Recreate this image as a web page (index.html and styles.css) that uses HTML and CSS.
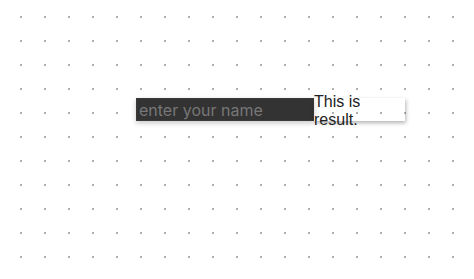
FILE: index.html
```html
<!DOCTYPE html>
<html>
<head>
<meta charset="utf-8">
<link rel="stylesheet" href="styles.css">
</head>
<body>
<div class="canvas">
  <div class="row">
    <input class="name-input" type="text" placeholder="enter your name">
    <div class="result"><span>This is result.</span></div>
  </div>
</div>
</body>
</html>
```
FILE: styles.css
```css
html, body {
  margin: 0;
  padding: 0;
  height: 100%;
}
body {
  background-color: #ffffff;
  background-image: radial-gradient(circle at center, #b0b0b0 0.9px, rgba(255,255,255,0) 1.5px);
  background-size: 24px 24px;
  background-position: 9px 5px;
  font-family: "Liberation Sans", Arial, sans-serif;
}
.canvas {
  padding: 98px 0 0 136px;
}
.row {
  display: flex;
  align-items: stretch;
  height: 23px;
}
.name-input {
  box-sizing: border-box;
  width: 178px;
  height: 23px;
  margin: 0;
  padding: 0 2px;
  border: 1px solid #3a3a3a;
  background: #333333;
  color: #dddddd;
  font-family: Inter, "Liberation Sans", sans-serif;
  font-size: 16px;
  outline: none;
  box-shadow: 0 2px 5px rgba(0,0,0,0.22);
}
.name-input::placeholder {
  color: #777777;
}
.result {
  box-sizing: border-box;
  width: 91px;
  height: 23px;
  display: flex;
  align-items: center;
  padding-top: 2px;
  background: transparent;
  box-shadow: 1px 2px 4px rgba(0,0,0,0.3);
  font-size: 16px;
  line-height: 18px;
  color: #222222;
}
```
